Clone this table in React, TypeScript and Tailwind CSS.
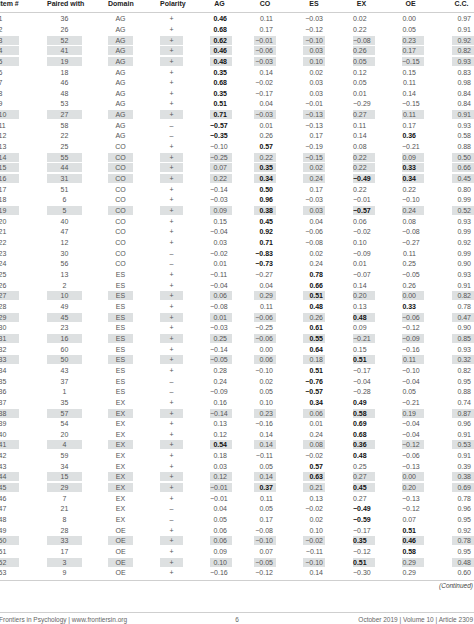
const DATA = `1|36|AG|+|0.46*|0.11|-0.03|0.02|0.00|0.97
2|26|AG|+|0.68*|0.17|-0.12|0.22|0.05|0.91
3|52|AG|+|0.62*|-0.01|-0.10|-0.08|0.23|0.92
4|41|AG|+|0.46*|-0.06|0.03|0.26|0.17|0.82
5|19|AG|+|0.48*|-0.03|0.10|0.05|-0.15|0.93
6|18|AG|+|0.35*|0.14|0.02|0.12|0.15|0.83
7|46|AG|+|0.68*|-0.02|0.03|0.05|0.11|0.98
8|48|AG|+|0.35*|-0.17|0.03|0.01|0.14|0.84
9|53|AG|+|0.51*|0.04|-0.01|-0.29|-0.15|0.84
10|27|AG|+|0.71*|-0.03|-0.13|0.27|0.11|0.91
11|58|AG|–|-0.57*|0.01|-0.13|0.11|0.17|0.93
12|22|AG|–|-0.35*|0.26|0.17|0.14|0.36*|0.58
13|25|CO|+|-0.10|0.57*|-0.19|0.08|-0.21|0.88
14|55|CO|+|-0.25|0.22|-0.15|0.22|0.09|0.50
15|44|CO|+|0.07|0.35*|0.02|0.22|0.33*|0.66
16|31|CO|+|0.22|0.34*|0.24|-0.49*|0.34*|0.45
17|51|CO|+|-0.14|0.50*|0.17|0.22|0.22|0.80
18|6|CO|+|-0.03|0.96*|-0.03|-0.01|-0.10|0.99
19|5|CO|+|0.09|0.38*|0.03|-0.57*|0.24|0.52
20|40|CO|+|0.15|0.45*|0.04|0.06|0.08|0.93
21|47|CO|+|-0.04|0.92*|-0.06|-0.02|-0.08|0.99
22|12|CO|+|0.03|0.71*|-0.08|0.10|-0.27|0.92
23|30|CO|–|-0.02|-0.83*|0.02|-0.09|0.11|0.99
24|56|CO|–|0.01|-0.73*|0.24|0.01|0.25|0.90
25|13|ES|+|-0.11|-0.27|0.78*|-0.07|-0.05|0.93
26|2|ES|+|-0.04|0.04|0.66*|0.14|0.26|0.91
27|10|ES|+|0.06|0.29|0.51*|0.20|0.00|0.82
28|49|ES|+|-0.08|0.11|0.48*|0.13|0.33*|0.78
29|45|ES|+|0.01|-0.06|0.26|0.48*|-0.06|0.47
30|23|ES|+|-0.03|-0.25|0.61*|0.09|-0.12|0.90
31|16|ES|+|0.25|-0.06|0.55*|-0.21|-0.09|0.85
32|60|ES|+|-0.14|0.00|0.64*|0.15|-0.16|0.93
33|50|ES|+|-0.05|0.06|0.18|0.51*|0.11|0.32
34|43|ES|+|0.28|-0.10|0.51*|-0.17|-0.10|0.82
35|37|ES|–|0.24|0.02|-0.76*|-0.04|-0.04|0.95
36|1|ES|–|-0.09|0.05|-0.57*|-0.28|0.05|0.88
37|35|EX|+|0.16|0.10|0.34*|0.49*|-0.21|0.74
38|57|EX|+|-0.14|0.23|0.06|0.58*|0.19|0.87
39|54|EX|+|0.13|-0.16|0.01|0.69*|-0.04|0.96
40|20|EX|+|0.12|0.14|0.24|0.68*|-0.04|0.91
41|4|EX|+|0.54*|0.14|0.08|0.36*|-0.12|0.53
42|59|EX|+|0.18|-0.11|-0.02|0.48*|-0.06|0.91
43|34|EX|+|0.03|0.05|0.57*|0.25|-0.13|0.39
44|15|EX|+|0.12|0.14|0.63*|0.27|0.00|0.38
45|29|EX|+|-0.01|0.37*|0.21|0.45*|0.20|0.69
46|7|EX|+|-0.01|0.11|0.13|0.27|-0.13|0.78
47|21|EX|–|0.04|0.05|-0.02|-0.49*|-0.12|0.96
48|8|EX|–|0.05|0.17|0.02|-0.59*|0.07|0.95
49|28|OE|+|0.06|-0.08|0.10|-0.17|0.51*|0.92
50|33|OE|+|0.06|-0.10|-0.02|0.35*|0.46*|0.78
51|17|OE|+|0.09|0.07|-0.11|-0.12|0.58*|0.95
52|3|OE|+|0.10|-0.05|-0.10|0.51*|0.29|0.48
53|9|OE|+|-0.16|-0.12|0.14|-0.30|0.29|0.60`
  .split("\n")
  .map((l) => l.split("|"));

const SHADED = [3, 4, 5, 10, 14, 15, 16, 19, 27, 29, 31, 33, 38, 41, 44, 45, 50, 52];

// pos = margin + width of the cell box, val = alignment of the values inside it
const COLS = [
  { head: "Item #", pos: "-ml-[3px] w-[22px]", val: "pl-[1.5px] text-left", hd: "pl-[1.5px] text-left" },
  { head: "Paired with", pos: "ml-[28px] w-[35px]", val: "text-center", hd: "text-center" },
  { head: "Domain", pos: "ml-[26px] w-[25px]", val: "text-center", hd: "text-center" },
  { head: "Polarity", pos: "ml-[27px] w-[23px]", val: "text-center", hd: "text-center" },
  { head: "AG", pos: "ml-[27px] w-[22px]", val: "text-right pr-[5px]", hd: "text-center pr-[3px]" },
  { head: "CO", pos: "ml-[22px] w-[22px]", val: "text-right pr-[3px]", hd: "text-center" },
  { head: "ES", pos: "ml-[27px] w-[22px]", val: "text-right pr-[2px]", hd: "text-center" },
  { head: "EX", pos: "ml-[28px] w-[22px]", val: "text-right pr-[11px]", hd: "text-center pr-[5px]" },
  { head: "OE", pos: "ml-[27px] w-[22px]", val: "text-right pr-[8px]", hd: "text-center pr-[5px]" },
  { head: "C.C.", pos: "ml-[28px] w-[22px]", val: "text-right pr-[3px]", hd: "text-center pr-[3px]" },
];

function Cell({ v, col, shaded, numeric }: { v: string; col: number; shaded: boolean; numeric: boolean }) {
  const bold = v.endsWith("*");
  let text = bold ? v.slice(0, -1) : v;
  if (numeric && text.startsWith("-")) text = "\u2212" + text.slice(1);
  const c = COLS[col];
  return (
    <div
      className={`${c.pos} ${c.val} h-[9px] shrink-0 whitespace-nowrap leading-[9px] ${shaded ? "bg-[#dde0e1]" : ""} ${
        bold ? "font-bold text-[#111]" : "text-[#555]"
      }`}
    >
      {text}
    </div>
  );
}

export default function App() {
  return (
    <div className="relative h-[624px] w-[474px] overflow-hidden bg-white font-['Liberation_Sans',Arial,sans-serif] text-[7px]">
      {/* header */}
      <div className="flex h-[12px] items-start">
        {COLS.map((c) => (
          <div key={c.head} className={`${c.pos} ${c.hd} shrink-0 whitespace-nowrap leading-[8px] font-bold text-[#222]`}>
            {c.head}
          </div>
        ))}
      </div>
      <div className="h-px bg-[#cfcfcf]" />

      {/* body */}
      <div className="pt-[0.4px]">
        {DATA.map((r) => {
          const shaded = SHADED.includes(Number(r[0]));
          return (
            <div key={r[0]} className="flex h-[10.66px] items-center">
              {r.map((v, i) => (
                <Cell key={i} v={v} col={i} shaded={shaded} numeric={i >= 4} />
              ))}
            </div>
          );
        })}
      </div>

      <div className="mt-[2px] h-px bg-[#cfcfcf]" />
      <div className="pr-px text-right text-[6.5px] italic leading-[10px] text-[#444]">(Continued)</div>

      <div className="mt-[21px] h-px bg-[#cfcfcf]" />
      <div className="grid grid-cols-[1fr_auto_1fr] text-[6.5px] leading-[14px] text-[#666]">
        <span className="-ml-[1px] justify-self-start whitespace-nowrap">Frontiers in Psychology | www.frontiersin.org</span>
        <span>6</span>
        <span className="pr-px justify-self-end whitespace-nowrap">October 2019 | Volume 10 | Article 2309</span>
      </div>
    </div>
  );
}
